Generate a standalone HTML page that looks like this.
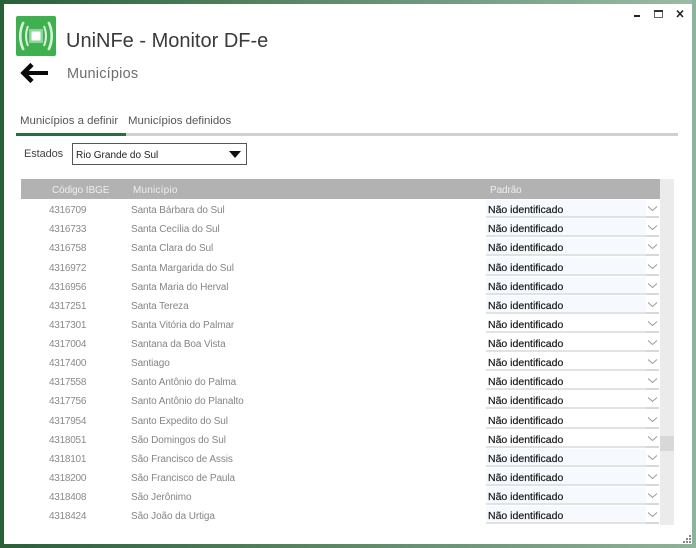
<!DOCTYPE html>
<html><head><meta charset="utf-8">
<style>
html,body{margin:0;padding:0}
body{width:696px;height:548px;position:relative;overflow:hidden;background:#fff;font-family:"Liberation Sans",sans-serif}
div{position:absolute;box-sizing:border-box}
.t{white-space:nowrap}
.r{left:0;width:696px;height:19px}
.c{left:49px;top:4px;font-size:10px;line-height:14px;color:#8a8a8a;letter-spacing:-.25px}
.m{left:131px;top:4px;font-size:10px;line-height:14px;color:#858585;letter-spacing:-.1px}
.b{left:486px;top:0;width:160px;height:18px;background:#f6faff;border-bottom:2px solid #e2e2e2}
.w .b{background:#fff}
.p{left:2px;top:3px;font-size:10.5px;line-height:14px;color:#1a1a1a;-webkit-text-stroke:.2px #1a1a1a}
.x{left:646px;top:0;width:13px;height:18px;background:#fff;border-bottom:2px solid #d8d8d8}
.x svg{position:absolute;left:1px;top:5px}
.h{top:184px;font-size:10px;line-height:14px;color:#eee}
</style></head><body>
<div style="left:0;top:0;width:696px;height:4px;background:linear-gradient(90deg,#2a5f38,#9dbba6)"></div>
<div style="left:0;top:0;width:4px;height:548px;background:#2a5f38"></div>
<div style="left:692px;top:0;width:4px;height:548px;background:#8fb39a"></div>
<div style="left:0;top:544px;width:696px;height:4px;background:linear-gradient(90deg,#2a5f38,#8fb39a)"></div>

<svg style="position:absolute;left:633px;top:9px" width="56" height="12" viewBox="0 0 56 12">
<rect x="1" y="6" width="6" height="2" fill="#222"/>
<rect x="21.5" y="1.5" width="8" height="7" fill="none" stroke="#666" stroke-width="1"/><rect x="21" y="1" width="9" height="2" fill="#333"/>
<path d="M44 1.5l6 6.5M50 1.5l-6 6.5" stroke="#222" stroke-width="1.6" fill="none"/>
</svg>

<div style="left:16px;top:16px;width:40px;height:40px;background:#3fb04f;border-radius:2px"></div>
<svg style="position:absolute;left:16px;top:16px" width="40" height="40" viewBox="0 0 40 40">
<rect x="13" y="13" width="14" height="14" fill="#8fd49a"/>
<rect x="15.5" y="15.5" width="9" height="9" fill="#fff"/>
<path d="M7.5 6Q1 20 7.5 34M32.5 6Q39 20 32.5 34" fill="none" stroke="#d8f0dc" stroke-width="2.6"/>
<path d="M12 10Q8 20 12 30M28 10Q32 20 28 30" fill="none" stroke="#d8f0dc" stroke-width="2"/>
</svg>
<div class="t" style="left:66px;top:29px;font-size:20px;line-height:25px;color:#3a3a3a">UniNFe - Monitor DF-e</div>
<svg style="position:absolute;left:20px;top:61px" width="30" height="24" viewBox="0 0 30 24">
<path d="M12 3.5L3.5 12L12 20.5" fill="none" stroke="#0a0a0a" stroke-width="4.5"/>
<rect x="5" y="10" width="23" height="4" fill="#0a0a0a"/>
</svg>
<div class="t" style="left:67px;top:65px;font-size:14.5px;line-height:18px;color:#6e6e6e;letter-spacing:.2px">Municípios</div>

<div class="t" style="left:20px;top:114px;font-size:11.4px;line-height:15px;color:#555">Municípios a definir</div>
<div class="t" style="left:128px;top:114px;font-size:11.4px;line-height:15px;color:#555">Municípios definidos</div>
<div style="left:16px;top:133px;width:662px;height:3px;background:#cfcfcf"></div>
<div style="left:16px;top:133px;width:110px;height:3px;background:#2e6b42"></div>

<div class="t" style="left:24px;top:147px;font-size:11px;line-height:15px;color:#444;letter-spacing:-.1px">Estados</div>
<div style="left:72px;top:143px;width:175px;height:22px;border:1px solid #555;background:#fff"></div>
<div class="t" style="left:76px;top:149px;font-size:10px;line-height:14px;color:#222">Rio Grande do Sul</div>
<svg style="position:absolute;left:229px;top:151px" width="12" height="7"><path d="M0 0H12L6 7Z" fill="#111"/></svg>

<div style="left:21px;top:179px;width:639px;height:20px;background:#b2b2b2"></div>
<div style="left:660px;top:179px;width:14px;height:346px;background:#ebebeb"></div>
<div style="left:660px;top:436px;width:14px;height:15px;background:#d8d8d8"></div>
<div class="h t" style="left:52px;letter-spacing:-.1px">Código IBGE</div>
<div class="h t" style="left:133px;letter-spacing:.2px">Município</div>
<div class="h t" style="left:490px;letter-spacing:-.1px">Padrão</div>

<div class="r" style="top:200px"><div class="c t">4316709</div><div class="m t">Santa Bárbara do Sul</div><div class="b"><div class="p t">Não identificado</div></div><div class="x"><svg width="11" height="7"><path d="M1 1.5l4.5 4 4.5-4" fill="none" stroke="#999"/></svg></div></div>
<div class="r" style="top:219px"><div class="c t">4316733</div><div class="m t">Santa Cecília do Sul</div><div class="b"><div class="p t">Não identificado</div></div><div class="x"><svg width="11" height="7"><path d="M1 1.5l4.5 4 4.5-4" fill="none" stroke="#999"/></svg></div></div>
<div class="r" style="top:238px"><div class="c t">4316758</div><div class="m t">Santa Clara do Sul</div><div class="b"><div class="p t">Não identificado</div></div><div class="x"><svg width="11" height="7"><path d="M1 1.5l4.5 4 4.5-4" fill="none" stroke="#999"/></svg></div></div>
<div class="r" style="top:258px"><div class="c t">4316972</div><div class="m t">Santa Margarida do Sul</div><div class="b"><div class="p t">Não identificado</div></div><div class="x"><svg width="11" height="7"><path d="M1 1.5l4.5 4 4.5-4" fill="none" stroke="#999"/></svg></div></div>
<div class="r" style="top:277px"><div class="c t">4316956</div><div class="m t">Santa Maria do Herval</div><div class="b"><div class="p t">Não identificado</div></div><div class="x"><svg width="11" height="7"><path d="M1 1.5l4.5 4 4.5-4" fill="none" stroke="#999"/></svg></div></div>
<div class="r" style="top:296px"><div class="c t">4317251</div><div class="m t">Santa Tereza</div><div class="b"><div class="p t">Não identificado</div></div><div class="x"><svg width="11" height="7"><path d="M1 1.5l4.5 4 4.5-4" fill="none" stroke="#999"/></svg></div></div>
<div class="r w" style="top:315px"><div class="c t">4317301</div><div class="m t">Santa Vitória do Palmar</div><div class="b"><div class="p t">Não identificado</div></div><div class="x"><svg width="11" height="7"><path d="M1 1.5l4.5 4 4.5-4" fill="none" stroke="#999"/></svg></div></div>
<div class="r w" style="top:334px"><div class="c t">4317004</div><div class="m t">Santana da Boa Vista</div><div class="b"><div class="p t">Não identificado</div></div><div class="x"><svg width="11" height="7"><path d="M1 1.5l4.5 4 4.5-4" fill="none" stroke="#999"/></svg></div></div>
<div class="r w" style="top:353px"><div class="c t">4317400</div><div class="m t">Santiago</div><div class="b"><div class="p t">Não identificado</div></div><div class="x"><svg width="11" height="7"><path d="M1 1.5l4.5 4 4.5-4" fill="none" stroke="#999"/></svg></div></div>
<div class="r w" style="top:372px"><div class="c t">4317558</div><div class="m t">Santo Antônio do Palma</div><div class="b"><div class="p t">Não identificado</div></div><div class="x"><svg width="11" height="7"><path d="M1 1.5l4.5 4 4.5-4" fill="none" stroke="#999"/></svg></div></div>
<div class="r w" style="top:391px"><div class="c t">4317756</div><div class="m t">Santo Antônio do Planalto</div><div class="b"><div class="p t">Não identificado</div></div><div class="x"><svg width="11" height="7"><path d="M1 1.5l4.5 4 4.5-4" fill="none" stroke="#999"/></svg></div></div>
<div class="r w" style="top:411px"><div class="c t">4317954</div><div class="m t">Santo Expedito do Sul</div><div class="b"><div class="p t">Não identificado</div></div><div class="x"><svg width="11" height="7"><path d="M1 1.5l4.5 4 4.5-4" fill="none" stroke="#999"/></svg></div></div>
<div class="r w" style="top:430px"><div class="c t">4318051</div><div class="m t">São Domingos do Sul</div><div class="b"><div class="p t">Não identificado</div></div><div class="x"><svg width="11" height="7"><path d="M1 1.5l4.5 4 4.5-4" fill="none" stroke="#999"/></svg></div></div>
<div class="r" style="top:449px"><div class="c t">4318101</div><div class="m t">São Francisco de Assis</div><div class="b"><div class="p t">Não identificado</div></div><div class="x"><svg width="11" height="7"><path d="M1 1.5l4.5 4 4.5-4" fill="none" stroke="#999"/></svg></div></div>
<div class="r" style="top:468px"><div class="c t">4318200</div><div class="m t">São Francisco de Paula</div><div class="b"><div class="p t">Não identificado</div></div><div class="x"><svg width="11" height="7"><path d="M1 1.5l4.5 4 4.5-4" fill="none" stroke="#999"/></svg></div></div>
<div class="r" style="top:487px"><div class="c t">4318408</div><div class="m t">São Jerônimo</div><div class="b"><div class="p t">Não identificado</div></div><div class="x"><svg width="11" height="7"><path d="M1 1.5l4.5 4 4.5-4" fill="none" stroke="#999"/></svg></div></div>
<div class="r" style="top:506px"><div class="c t">4318424</div><div class="m t">São João da Urtiga</div><div class="b"><div class="p t">Não identificado</div></div><div class="x"><svg width="11" height="7"><path d="M1 1.5l4.5 4 4.5-4" fill="none" stroke="#999"/></svg></div></div>

<svg style="position:absolute;left:683px;top:535px" width="9" height="9"><path d="M6 0h2v2H6zM3 3h2v2H3zM6 3h2v2H6zM0 6h2v2H0zM3 6h2v2H3zM6 6h2v2H6z" fill="#888"/></svg>
</body></html>
